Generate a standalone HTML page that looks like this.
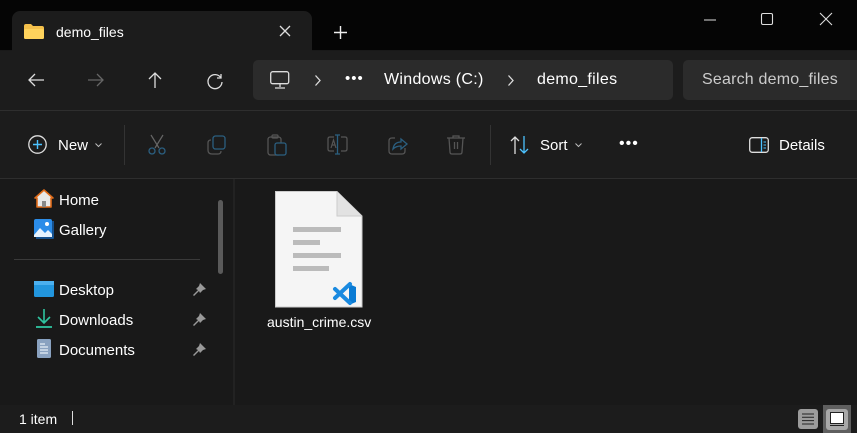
<!DOCTYPE html>
<html><head><meta charset="utf-8"><style>
*{box-sizing:border-box;margin:0;padding:0}
body{width:857px;height:433px;overflow:hidden;background:#191919;font-family:"Liberation Sans",sans-serif;color:#fff;position:relative}
.a{position:absolute}
svg{position:absolute;overflow:visible}
.t{font-size:15px;position:absolute;white-space:nowrap}
</style></head><body>
<div class="a" style="left:0;top:0;width:857px;height:50px;background:#050505"></div>
<div class="a" style="left:12px;top:11px;width:300px;height:40px;background:#1c1c1c;border-radius:8px 8px 0 0"></div>
<svg style="left:24px;top:24px" width="20" height="15"><path d="M0 2 Q0 0 2 0 H7 L9 2 H18 Q20 2 20 4 V13 Q20 15 18 15 H2 Q0 15 0 13Z" fill="#f4c04b"/><rect x="0" y="5" width="20" height="10" rx="1.5" fill="#ffd35c"/></svg>
<div class="t" style="left:56px;top:24px;font-size:14px">demo_files</div>
<svg style="left:280px;top:26px" width="10" height="10"><path d="M0 0L10 10M10 0L0 10" stroke="#ddd" stroke-width="1.3"/></svg>
<svg style="left:334px;top:26px" width="13" height="13"><path d="M6.5 0V13M0 6.5H13" stroke="#eee" stroke-width="1.4"/></svg>
<svg style="left:704px;top:19px" width="12" height="2"><path d="M0 1H12" stroke="#ddd" stroke-width="1"/></svg>
<svg style="left:761px;top:13px" width="12" height="12"><rect x="0.5" y="0.5" width="11" height="11" rx="1.5" fill="none" stroke="#ddd" stroke-width="1.1"/></svg>
<svg style="left:820px;top:13px" width="12" height="12"><path d="M0 0L12 12M12 0L0 12" stroke="#ddd" stroke-width="1.1"/></svg>

<div class="a" style="left:0;top:51px;width:857px;height:59px;background:#1c1c1c"></div>
<div class="a" style="left:0;top:110px;width:857px;height:1px;background:#2e2e2e"></div>
<svg style="left:28px;top:73px" width="16" height="14"><path d="M16 7H1M7 1L1 7L7 13" stroke="#ddd" stroke-width="1.3" fill="none"/></svg>
<svg style="left:88px;top:73px" width="16" height="14"><path d="M0 7H15M9 1L15 7L9 13" stroke="#666" stroke-width="1.3" fill="none"/></svg>
<svg style="left:148px;top:72px" width="14" height="16"><path d="M7 16V1M1 7L7 1L13 7" stroke="#ddd" stroke-width="1.3" fill="none"/></svg>
<svg style="left:207px;top:73px" width="16" height="16"><path d="M14 5A7 7 0 1 0 15 9" stroke="#ddd" stroke-width="1.3" fill="none"/><path d="M14 1V5H10" stroke="#ddd" stroke-width="1.3" fill="none"/></svg>
<div class="a" style="left:253px;top:60px;width:420px;height:40px;background:#2b2b2b;border-radius:5px"></div>
<svg style="left:270px;top:71px" width="20" height="18"><rect x="0.7" y="0.7" width="18" height="12" rx="2" fill="none" stroke="#ddd" stroke-width="1.3"/><path d="M10 13V16M5 17H15" stroke="#ddd" stroke-width="1.3"/></svg>
<svg style="left:315px;top:75px" width="6" height="11"><path d="M0.5 0.5L5 5.5L0.5 10.5" stroke="#ddd" stroke-width="1.3" fill="none"/></svg>
<div class="t" style="left:345px;top:70px;letter-spacing:1px">•••</div>
<div class="t" style="left:384px;top:71px;font-size:16px;letter-spacing:0.3px">Windows (C:)</div>
<svg style="left:508px;top:75px" width="6" height="11"><path d="M0.5 0.5L5 5.5L0.5 10.5" stroke="#ddd" stroke-width="1.3" fill="none"/></svg>
<div class="t" style="left:537px;top:71px;font-size:16px;letter-spacing:0.3px">demo_files</div>
<div class="a" style="left:683px;top:60px;width:180px;height:40px;background:#2b2b2b;border-radius:5px"></div>
<div class="t" style="left:702px;top:71px;font-size:16px;color:#ccc;letter-spacing:0.2px">Search demo_files</div>

<div class="a" style="left:0;top:111px;width:857px;height:67px;background:#1c1c1c"></div>
<div class="a" style="left:0;top:178px;width:857px;height:1px;background:#2e2e2e"></div>
<svg style="left:28px;top:135px" width="19" height="19"><circle cx="9.5" cy="9.5" r="8.7" fill="none" stroke="#ddd" stroke-width="1.3"/><path d="M9.5 5V14M5 9.5H14" stroke="#4cc2ff" stroke-width="1.4"/></svg>
<div class="t" style="left:58px;top:137px">New</div>
<svg style="left:95px;top:143px" width="7" height="4"><path d="M0.5 0.5L3.5 3.5L6.5 0.5" stroke="#bbb" fill="none"/></svg>
<div class="a" style="left:124px;top:125px;width:1px;height:40px;background:#333"></div>
<svg style="left:148px;top:135px" width="18" height="20"><path d="M3 0L11 13M15 0L7 13" stroke="#666" stroke-width="1.2"/><circle cx="4" cy="16" r="3" fill="none" stroke="#2b5f80" stroke-width="1.3"/><circle cx="14" cy="16" r="3" fill="none" stroke="#2b5f80" stroke-width="1.3"/></svg>
<svg style="left:207px;top:135px" width="20" height="20"><rect x="6" y="1" width="12" height="13" rx="2.5" fill="none" stroke="#2b5f80" stroke-width="1.3"/><path d="M4 5Q1 5 1 8V15Q1 19 5 19H11Q14 19 14 16" stroke="#555" stroke-width="1.3" fill="none"/></svg>
<svg style="left:267px;top:134px" width="20" height="22"><rect x="1" y="3" width="13" height="18" rx="2.5" fill="none" stroke="#555" stroke-width="1.3"/><rect x="5" y="1" width="6" height="3" rx="1" fill="none" stroke="#555" stroke-width="1.2"/><rect x="8" y="9" width="11" height="12" rx="2" fill="#1c1c1c" stroke="#2b5f80" stroke-width="1.3"/></svg>
<svg style="left:327px;top:135px" width="21" height="20"><path d="M7 2H3Q1 2 1 4V14Q1 16 3 16H7M14 2H18Q20 2 20 4V14Q20 16 18 16H14" stroke="#555" stroke-width="1.3" fill="none"/><path d="M10.5 0V19M8 0H13M8 19H13" stroke="#2b5f80" stroke-width="1.3"/><path d="M4 13L6.5 5L9 13M5 10H8" stroke="#555" stroke-width="1.2" fill="none"/></svg>
<svg style="left:388px;top:135px" width="20" height="20"><path d="M7 3H4Q1 3 1 6V16Q1 19 4 19H14Q17 19 17 16V13" stroke="#555" stroke-width="1.3" fill="none"/><path d="M5 14Q6 7 13 7V4L19 9L13 14V11Q8 11 5 14Z" fill="none" stroke="#2b5f80" stroke-width="1.3"/></svg>
<svg style="left:447px;top:135px" width="18" height="20"><path d="M0 3H18M6 3V1H12V3M2 3L3 17Q3 19 5 19H13Q15 19 15 17L16 3M7.5 7V14M10.5 7V14" stroke="#555" stroke-width="1.3" fill="none"/></svg>
<div class="a" style="left:490px;top:125px;width:1px;height:40px;background:#333"></div>
<svg style="left:510px;top:136px" width="20" height="18"><path d="M5 18V1M1 5L5 1L9 5" stroke="#ddd" stroke-width="1.3" fill="none"/><path d="M14 0V17M10 13L14 17L18 13" stroke="#4cc2ff" stroke-width="1.3" fill="none"/></svg>
<div class="t" style="left:540px;top:137px">Sort</div>
<svg style="left:575px;top:143px" width="7" height="4"><path d="M0.5 0.5L3.5 3.5L6.5 0.5" stroke="#bbb" fill="none"/></svg>
<div class="t" style="left:619px;top:135px;letter-spacing:1px;font-size:16px">•••</div>
<svg style="left:749px;top:137px" width="20" height="16"><rect x="0.7" y="0.7" width="18.6" height="14.6" rx="2.5" fill="none" stroke="#ddd" stroke-width="1.3"/><path d="M12.5 1V15" stroke="#4cc2ff" stroke-width="1.3"/><path d="M14.5 5H17M14.5 8H17M14.5 11H17" stroke="#4cc2ff" stroke-width="1"/></svg>
<div class="t" style="left:779px;top:137px">Details</div>

<div class="a" style="left:233px;top:179px;width:2px;height:226px;background:#222"></div>
<div class="a" style="left:218px;top:200px;width:5px;height:74px;background:#5a5a5a;border-radius:3px"></div>
<svg style="left:34px;top:189px" width="20" height="19"><path d="M10 1L1 9H3V18H17V9H19Z" fill="#e8e8e8" stroke="#e06c1a" stroke-width="1.6" stroke-linejoin="round"/><rect x="8" y="12" width="4" height="6" fill="#888"/></svg>
<div class="t" style="left:59px;top:192px">Home</div>
<svg style="left:34px;top:219px" width="20" height="20"><rect x="0" y="0" width="18" height="18" rx="2" fill="#2b8ce8"/><path d="M0 16L6 9L11 14L14 11L18 15V18H0Z" fill="#e6f3ff"/><circle cx="13" cy="5" r="2" fill="#fff"/><path d="M2 19H19V2" stroke="#1663b3" stroke-width="1.5" fill="none"/></svg>
<div class="t" style="left:59px;top:222px">Gallery</div>
<div class="a" style="left:14px;top:259px;width:186px;height:1px;background:#3a3a3a"></div>
<svg style="left:34px;top:281px" width="20" height="17"><rect x="0" y="0" width="20" height="16" rx="1.5" fill="#2296de"/><rect x="0" y="0" width="20" height="4" fill="#4bb0ef"/></svg>
<div class="t" style="left:59px;top:282px">Desktop</div>
<svg style="left:36px;top:309px" width="16" height="19"><path d="M8 0V14M2 8L8 14L14 8" stroke="#2fc4a0" stroke-width="1.6" fill="none"/><path d="M0 18H16" stroke="#2fc4a0" stroke-width="1.8"/></svg>
<div class="t" style="left:59px;top:312px">Downloads</div>
<svg style="left:37px;top:339px" width="14" height="19"><rect x="0" y="0" width="14" height="19" rx="1.5" fill="#8aa2c0"/><path d="M3 5H8M3 8H11M3 11H11M3 14H11" stroke="#e8eef5" stroke-width="1.2"/></svg>
<div class="t" style="left:59px;top:342px">Documents</div>
<svg style="left:193px;top:283px" width="13" height="13"><path d="M7 0L13 6L10 7L7 10L6 8L1 13L0 12L5 7L3 6L6 3Z" fill="#999"/></svg>
<svg style="left:193px;top:313px" width="13" height="13"><path d="M7 0L13 6L10 7L7 10L6 8L1 13L0 12L5 7L3 6L6 3Z" fill="#999"/></svg>
<svg style="left:193px;top:343px" width="13" height="13"><path d="M7 0L13 6L10 7L7 10L6 8L1 13L0 12L5 7L3 6L6 3Z" fill="#999"/></svg>

<svg style="left:275px;top:191px" width="88" height="117"><path d="M0.5 0.5H62L87 25V116H0.5Z" fill="#f5f5f5" stroke="#ccc"/><path d="M62 0.5V25H87" fill="#e2e2e2" stroke="#ccc"/><rect x="18" y="36" width="48" height="5" fill="#bbb"/><rect x="18" y="49" width="27" height="5" fill="#bbb"/><rect x="18" y="62" width="48" height="5" fill="#bbb"/><rect x="18" y="75" width="36" height="5" fill="#bbb"/><path d="M74 93L81 96V111L74 114Z" fill="#0a7bd4"/><path d="M75 93L60 107M60 98L75 112" stroke="#1a8ae0" stroke-width="4" stroke-linecap="round"/></svg>
<div class="t" style="left:267px;top:314px;font-size:14px">austin_crime.csv</div>

<div class="a" style="left:0;top:405px;width:857px;height:28px;background:#1c1c1c"></div>
<div class="t" style="left:19px;top:411px;font-size:14px">1 item</div>
<div class="a" style="left:72px;top:411px;width:1px;height:14px;background:#ddd"></div>
<div class="a" style="left:798px;top:409px;width:20px;height:20px;background:#9c9c9c;border-radius:3px"></div>
<svg style="left:802px;top:413px" width="12" height="12"><path d="M0 1H12M0 4.3H12M0 7.6H12M0 11H12" stroke="#222" stroke-width="1"/></svg>
<div class="a" style="left:823px;top:405px;width:28px;height:28px;background:#5f5f5f"></div>
<div class="a" style="left:826px;top:409px;width:22px;height:21px;background:#a8a8a8;border-radius:3px"></div>
<div class="a" style="left:830px;top:412px;width:14px;height:12px;background:#fff;border:1px solid #222"></div>
<div class="a" style="left:830px;top:425px;width:14px;height:1px;background:#222"></div>
</body></html>
